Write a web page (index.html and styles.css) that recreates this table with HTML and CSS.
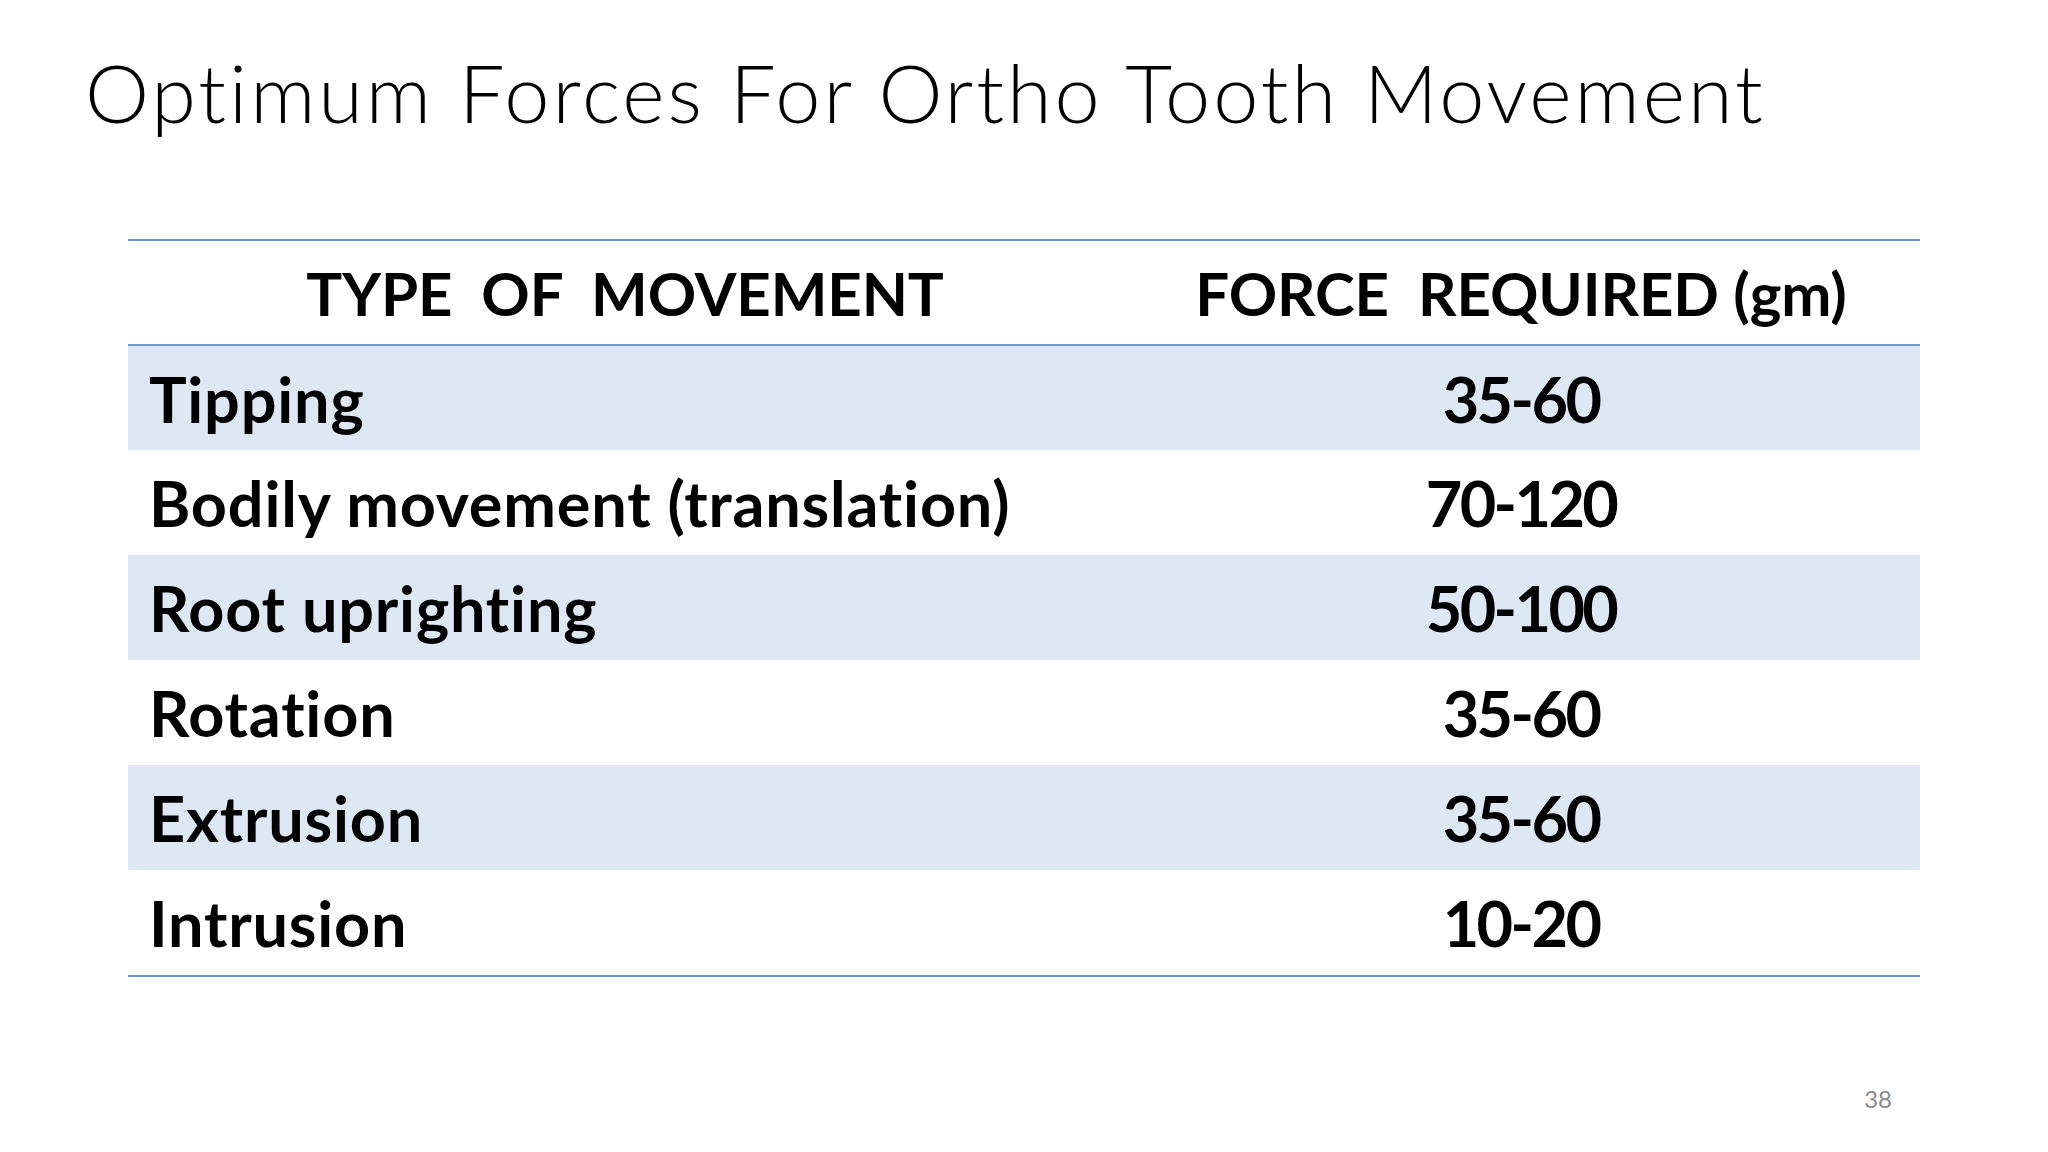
FILE: index.html
```html
<!DOCTYPE html>
<html lang="en">
<head>
<meta charset="utf-8">
<title>Optimum Forces For Ortho Tooth Movement</title>
<link rel="stylesheet" href="styles.css">
</head>
<body>
<main class="slide">
  <h1 class="title">Optimum Forces For Ortho Tooth Movement</h1>
  <section class="table" role="table">
    <div class="row head" role="row">
      <div class="cell center" role="columnheader">TYPE&nbsp; OF&nbsp; MOVEMENT</div>
      <div class="cell center" role="columnheader">FORCE&nbsp; REQUIRED (gm)</div>
    </div>
    <div class="row shaded first" role="row">
      <div class="cell" role="cell">Tipping</div>
      <div class="cell center num" role="cell">35-60</div>
    </div>
    <div class="row" role="row">
      <div class="cell" role="cell">Bodily movement (translation)</div>
      <div class="cell center num" role="cell">70-120</div>
    </div>
    <div class="row shaded" role="row">
      <div class="cell" role="cell">Root uprighting</div>
      <div class="cell center num" role="cell">50-100</div>
    </div>
    <div class="row" role="row">
      <div class="cell" role="cell">Rotation</div>
      <div class="cell center num" role="cell">35-60</div>
    </div>
    <div class="row shaded" role="row">
      <div class="cell" role="cell">Extrusion</div>
      <div class="cell center num" role="cell">35-60</div>
    </div>
    <div class="row" role="row">
      <div class="cell" role="cell">Intrusion</div>
      <div class="cell center num" role="cell">10-20</div>
    </div>
  </section>
  <footer class="footer"><span class="page-num">38</span></footer>
</main>
</body>
</html>
```
FILE: styles.css
```css
html, body {
  margin: 0;
  padding: 0;
  background: #ffffff;
}

.slide {
  width: 2048px;
  height: 1152px;
  box-sizing: border-box;
  padding-top: 51px;
  font-family: "Lato", "Open Sans", "Liberation Sans", sans-serif;
  color: #000000;
  overflow: hidden;
}

.title {
  margin: 0 0 0 85px;
  font-size: 81px;
  font-weight: 300;
  line-height: 81px;
  height: 81px;
  letter-spacing: 3px;
  white-space: nowrap;
}

.table {
  margin: 107px 0 0 128px;
  width: 1792px;
  border-top: 2px solid #6f9bcb;
  border-bottom: 2px solid #6f9bcb;
}

.row {
  display: grid;
  grid-template-columns: 994px 798px;
  align-items: center;
  height: 105px;
  font-size: 63px;
  font-weight: 700;
  line-height: 63px;
  letter-spacing: 0.8px;
}

.row.head {
  height: 103px;
  border-bottom: 2px solid #6f9bcb;
  font-size: 60px;
  line-height: 60px;
  letter-spacing: -0.1px;
}

.row.first {
  height: 104px;
}

.row.shaded {
  background: #dee8f5;
}

.cell {
  padding-left: 21px;
  white-space: nowrap;
}

.cell.center {
  padding-left: 0;
  text-align: center;
}

.cell.num {
  letter-spacing: -2.6px;
}

.footer {
  display: flex;
  justify-content: flex-end;
  margin-top: 110px;
  padding-right: 156px;
}

.page-num {
  font-size: 24px;
  line-height: 24px;
  color: #8c8c8c;
}
```
